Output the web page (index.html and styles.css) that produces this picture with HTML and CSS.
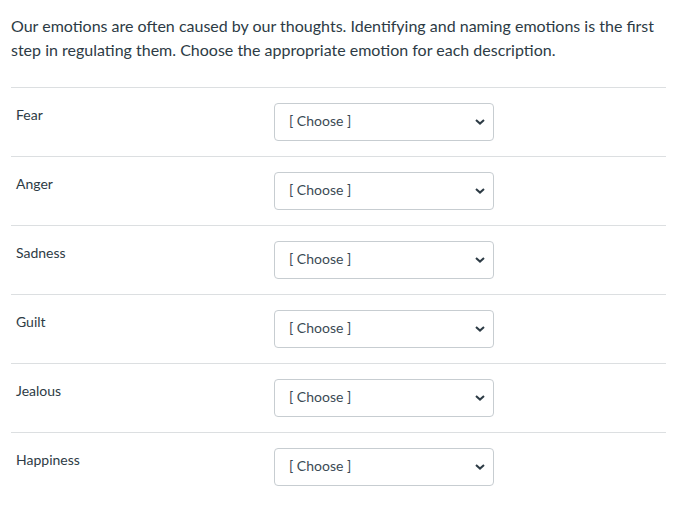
FILE: index.html
```html
<!DOCTYPE html>
<html lang="en">
<head>
    <meta charset="UTF-8">
    <title>Matching - Emotions</title>
    <link rel="stylesheet" href="styles.css">
</head>
<body>

    <div class="question">
        <p class="question-text">Our emotions are often caused by our thoughts. Identifying and naming emotions is the first step in regulating them. Choose the appropriate emotion for each description.</p>

        <div class="answers">
            <div class="answer">
                <label class="answer-label" for="m1">Fear</label>
                <span class="select-wrap">
                    <select id="m1"><option>[ Choose ]</option></select>
                    <svg class="chevron" width="10" height="6" viewBox="0 0 10 6"><path d="M1 1 L5 4.6 L9 1" fill="none" stroke="#2d3b45" stroke-width="2"/></svg>
                </span>
            </div>
            <div class="answer">
                <label class="answer-label" for="m2">Anger</label>
                <span class="select-wrap">
                    <select id="m2"><option>[ Choose ]</option></select>
                    <svg class="chevron" width="10" height="6" viewBox="0 0 10 6"><path d="M1 1 L5 4.6 L9 1" fill="none" stroke="#2d3b45" stroke-width="2"/></svg>
                </span>
            </div>
            <div class="answer">
                <label class="answer-label" for="m3">Sadness</label>
                <span class="select-wrap">
                    <select id="m3"><option>[ Choose ]</option></select>
                    <svg class="chevron" width="10" height="6" viewBox="0 0 10 6"><path d="M1 1 L5 4.6 L9 1" fill="none" stroke="#2d3b45" stroke-width="2"/></svg>
                </span>
            </div>
            <div class="answer">
                <label class="answer-label" for="m4">Guilt</label>
                <span class="select-wrap">
                    <select id="m4"><option>[ Choose ]</option></select>
                    <svg class="chevron" width="10" height="6" viewBox="0 0 10 6"><path d="M1 1 L5 4.6 L9 1" fill="none" stroke="#2d3b45" stroke-width="2"/></svg>
                </span>
            </div>
            <div class="answer">
                <label class="answer-label" for="m5">Jealous</label>
                <span class="select-wrap">
                    <select id="m5"><option>[ Choose ]</option></select>
                    <svg class="chevron" width="10" height="6" viewBox="0 0 10 6"><path d="M1 1 L5 4.6 L9 1" fill="none" stroke="#2d3b45" stroke-width="2"/></svg>
                </span>
            </div>
            <div class="answer">
                <label class="answer-label" for="m6">Happiness</label>
                <span class="select-wrap">
                    <select id="m6"><option>[ Choose ]</option></select>
                    <svg class="chevron" width="10" height="6" viewBox="0 0 10 6"><path d="M1 1 L5 4.6 L9 1" fill="none" stroke="#2d3b45" stroke-width="2"/></svg>
                </span>
            </div>
        </div>
    </div>

</body>
</html>
```

FILE: styles.css
```css
body {
    font-family: Lato, "Open Sans", sans-serif;
    margin: 0;
    padding: 0;
    background-color: #fff;
    color: #2d3b45;
}
.question {
    margin: 0 18px 0 11px;
}
.question-text {
    font-size: 16px;
    line-height: 24px;
    margin: 14px 0 25px 0;
}
.answer {
    display: grid;
    grid-template-columns: 263px 220px;
    align-items: start;
    border-top: 1px solid #dcdfe1;
    padding: 15px 0 15px 0;
}
.answer-label {
    font-size: 14px;
    line-height: 20px;
    padding: 2px 0 0 5px;
}
.select-wrap {
    position: relative;
    display: block;
}
.select-wrap select {
    appearance: none;
    -webkit-appearance: none;
    display: block;
    width: 220px;
    height: 38px;
    margin: 0;
    padding: 0 30px 4px 14px;
    font-family: Lato, "Open Sans", sans-serif;
    font-size: 14px;
    color: #3b4a54;
    background-color: #fff;
    border: 1px solid #c7cdd1;
    border-radius: 4px;
}
.chevron {
    position: absolute;
    right: 9px;
    top: 16px;
    pointer-events: none;
}
```
